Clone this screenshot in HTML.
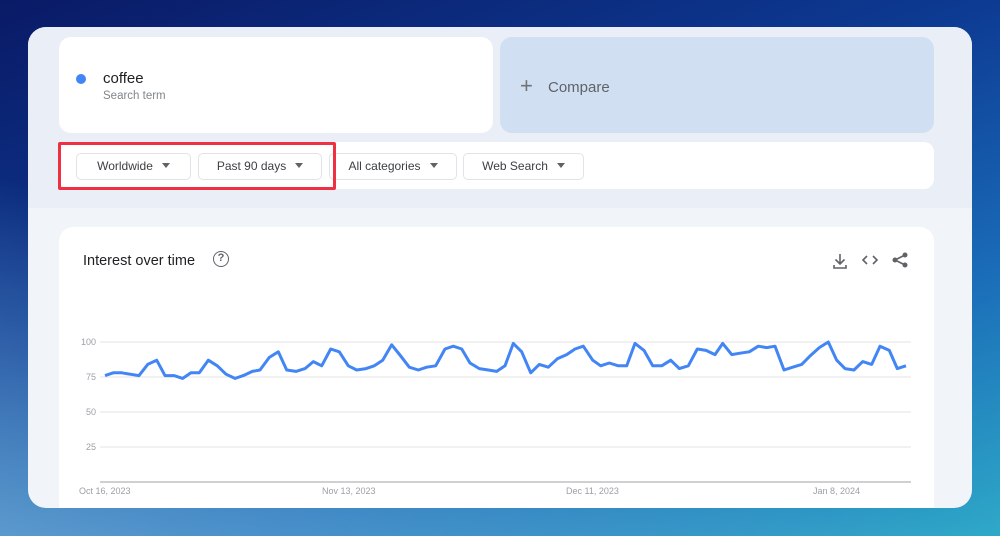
<!DOCTYPE html>
<html><head><meta charset="utf-8"><style>
*{box-sizing:border-box;margin:0;padding:0}
body{width:1000px;height:536px;overflow:hidden;font-family:"Liberation Sans",Arial,sans-serif;position:relative;
background:linear-gradient(160deg,#0a1a66 0%,#0d3a92 40%,#1a6cb8 70%,#2fa9c8 100%);}
.bgl{position:absolute;inset:0;background:linear-gradient(20deg,rgba(120,180,220,.7) 0%,rgba(60,120,190,0) 40%);}
.frame{position:absolute;left:28px;top:27px;width:944px;height:481px;border-radius:18px;overflow:hidden;background:#f1f4f9}
.top{position:absolute;left:0;top:0;width:944px;height:181px;background:#e9eef7}
.term{position:absolute;left:31px;top:10px;width:434px;height:96px;background:#fff;border-radius:12px}
.dot{position:absolute;left:48px;top:47px;width:10px;height:10px;border-radius:50%;background:#4285f4}
.t1{position:absolute;left:75px;top:43px;font-size:15px;color:#202124}
.t2{position:absolute;left:75px;top:63px;font-size:11.5px;color:#80868b}
.cmp{position:absolute;left:472px;top:10px;width:434px;height:96px;background:#d1dff2;border-radius:12px}
.cmp span{position:absolute;left:48px;top:42px;font-size:15px;color:#5f6368}
.cmp b{position:absolute;left:20px;top:36px;font-size:22px;font-weight:normal;color:#6f7378}
.bar{position:absolute;left:31px;top:115px;width:875px;height:47px;background:#fff;border-radius:10px}
.btn{position:absolute;top:11px;height:27px;border:1px solid #e0e3e7;border-radius:5px;font-size:12px;color:#3c4043;line-height:25px;text-align:center}
.btn i{display:inline-block;width:0;height:0;border-left:4px solid transparent;border-right:4px solid transparent;border-top:5px solid #5f6368;margin-left:9px;vertical-align:2px}
.red{position:absolute;left:30px;top:115px;width:278px;height:48px;border:3px solid #ef2f42;border-radius:2px}
.card{position:absolute;left:31px;top:200px;width:875px;height:300px;background:#fff;border-radius:14px}
.title{position:absolute;left:24px;top:26px;font-size:14.5px;color:#202124}
.q{position:absolute;left:154px;top:24px;width:16px;height:16px;border:1.5px solid #5f6368;border-radius:50%;font-size:11px;color:#5f6368;text-align:center;line-height:13px;font-weight:bold}
.yl{position:absolute;font-size:9px;color:#9aa0a6;text-align:right;width:30px}
.xl{position:absolute;font-size:9px;color:#9aa0a6}
</style></head><body>
<div class="bgl"></div>
<div class="frame">
<div class="top"></div>
<div class="term"></div>
<div class="dot"></div>
<div class="t1">coffee</div>
<div class="t2">Search term</div>
<div class="cmp"><b>+</b><span>Compare</span></div>
<div class="bar">
<div class="btn" style="left:17px;width:115px">Worldwide<i></i></div>
<div class="btn" style="left:139px;width:124px">Past 90 days<i></i></div>
<div class="btn" style="left:270px;width:128px">All categories<i></i></div>
<div class="btn" style="left:404px;width:121px">Web Search<i></i></div>
</div>
<div class="red"></div>
<div class="card">
<div class="title">Interest over time</div>
<div class="q">?</div>
</div>
</div>
<svg width="1000" height="536" style="position:absolute;left:0;top:0">
<g stroke="#5f6368" stroke-width="1.6" fill="none">
<path d="M840 254v10M835.5 259.5l4.5 4.5 4.5-4.5M834 265v3h12v-3"/>
<path d="M867 256l-4 4 4 4M873 256l4 4-4 4"/>
<path d="M905 255l-10 5 10 5"/>
</g>
<g fill="#5f6368"><circle cx="905" cy="255" r="2.5"/><circle cx="895" cy="260" r="2.5"/><circle cx="905" cy="265" r="2.5"/></g>
<g stroke="#e3e3e3" stroke-width="1">
<line x1="100" y1="342" x2="911" y2="342"/><line x1="100" y1="377" x2="911" y2="377"/>
<line x1="100" y1="412" x2="911" y2="412"/><line x1="100" y1="447" x2="911" y2="447"/>
</g>
<line x1="100" y1="482" x2="911" y2="482" stroke="#b5b5b5" stroke-width="1.2"/>
<polyline id="pl" fill="none" stroke="#4285f4" stroke-width="3" stroke-linejoin="round" points=""/>
</svg>
<div class="yl" style="left:66px;top:337px">100</div>
<div class="yl" style="left:66px;top:372px">75</div>
<div class="yl" style="left:66px;top:407px">50</div>
<div class="yl" style="left:66px;top:442px">25</div>
<div class="xl" style="left:79px;top:486px">Oct 16, 2023</div>
<div class="xl" style="left:322px;top:486px">Nov 13, 2023</div>
<div class="xl" style="left:566px;top:486px">Dec 11, 2023</div>
<div class="xl" style="left:813px;top:486px">Jan 8, 2024</div>
<script>
var a=[[135,76],[160,78],[185,78],[210,77],[237,76],[263,84],[290,87],[315,76],[342,76],[368,74],[393,78],[418,78],[445,87],[472,83],[498,77],[525,74],[550,76],[577,79],[600,80],[628,89],[655,93],[680,80],[708,79],[735,81],[760,86],[785,83],[812,95],[838,93],[865,83],[890,80],[918,81],[943,83],[968,87],[995,98],[1022,90],[1048,82],[1075,80],[1100,82],[1127,83],[1155,95],[1180,97],[1205,95],[1230,85],[1258,81],[1285,80],[1310,79],[1335,83],[1360,99],[1385,93],[1412,78],[1438,84],[1465,82]];
var b=[[232,88],[260,91],[285,95],[310,97],[338,87],[362,83],[388,85],[415,83],[440,83],[465,99],[492,94],[518,83],[545,83],[572,87],[598,81],[625,83],[652,95],[678,94],[705,91],[728,99],[755,91],[780,92],[808,93],[835,97],[860,96],[885,97],[912,80],[938,82],[965,84],[990,90],[1018,96],[1045,100],[1070,87],[1095,81],[1122,80],[1148,86],[1175,84],[1200,97],[1228,94],[1252,81],[1278,83]];
var p=[];a.forEach(function(q){p.push((60+q[0]/3).toFixed(1)+","+(482-1.4*q[1]).toFixed(1))});
b.forEach(function(q){p.push((480+q[0]/3).toFixed(1)+","+(482-1.4*q[1]).toFixed(1))});
document.getElementById("pl").setAttribute("points",p.join(" "));
</script>
</body></html>
